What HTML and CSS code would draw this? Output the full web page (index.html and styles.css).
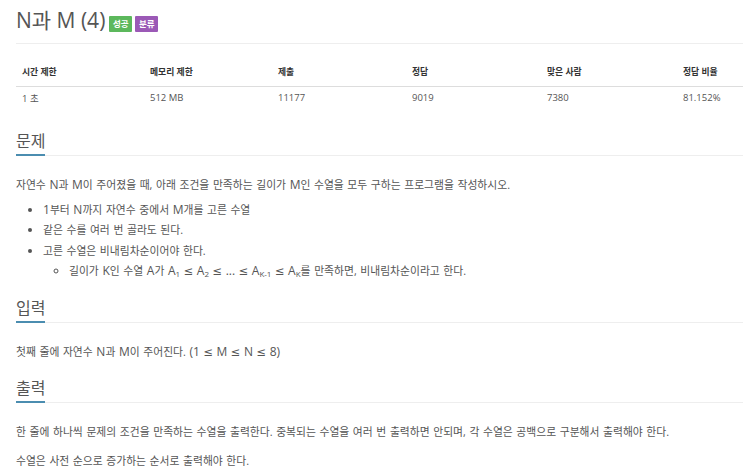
FILE: index.html
```html
<!DOCTYPE html>
<html lang="ko">
<head>
<meta charset="utf-8">
<link rel="stylesheet" href="styles.css">
</head>
<body>
<div class="page">
  <div class="page-header">
    <h1 class="title">N과 M (4) <span class="label label-green">성공</span><span class="label label-purple">분류</span></h1>
  </div>
  <table class="stats">
    <thead>
      <tr><th>시간 제한</th><th>메모리 제한</th><th>제출</th><th>정답</th><th>맞은 사람</th><th>정답 비율</th></tr>
    </thead>
    <tbody>
      <tr><td>1 초</td><td>512 MB</td><td>11177</td><td>9019</td><td>7380</td><td>81.152%</td></tr>
    </tbody>
  </table>

  <section class="section section-first">
    <div class="headline"><h2><span>문제</span></h2></div>
    <div class="text">
      <p>자연수 <span class="en">N</span>과 <span class="en">M</span>이 주어졌을 때, 아래 조건을 만족하는 길이가 <span class="en">M</span>인 수열을 모두 구하는 프로그램을 작성하시오.</p>
      <ul class="list">
        <li><span class="en">1</span>부터 <span class="en">N</span>까지 자연수 중에서 <span class="en">M</span>개를 고른 수열</li>
        <li>같은 수를 여러 번 골라도 된다.</li>
        <li>고른 수열은 비내림차순이어야 한다.
          <ul class="sublist">
            <li>길이가 <span class="en">K</span>인 수열 <span class="en">A</span>가 <span class="en">A<sub>1</sub> <span class="op">≤</span> A<sub>2</sub> <span class="op">≤</span> ... <span class="op">≤</span> A<sub>K-1</sub> <span class="op">≤</span> A<sub>K</sub></span>를 만족하면, 비내림차순이라고 한다.</li>
          </ul>
        </li>
      </ul>
    </div>
  </section>

  <section class="section">
    <div class="headline"><h2><span>입력</span></h2></div>
    <div class="text">
      <p>첫째 줄에 자연수 <span class="en">N</span>과 <span class="en">M</span>이 주어진다. <span class="en">(1 <span class="op">≤</span> M <span class="op">≤</span> N <span class="op">≤</span> 8)</span></p>
    </div>
  </section>

  <section class="section">
    <div class="headline"><h2><span>출력</span></h2></div>
    <div class="text">
      <p>한 줄에 하나씩 문제의 조건을 만족하는 수열을 출력한다. 중복되는 수열을 여러 번 출력하면 안되며, 각 수열은 공백으로 구분해서 출력해야 한다.</p>
      <p>수열은 사전 순으로 증가하는 순서로 출력해야 한다.</p>
    </div>
  </section>
</div>
</body>
</html>
```

FILE: styles.css
```css
* { box-sizing: border-box; }
html, body { margin: 0; padding: 0; background: #fff; }
body {
  font-family: "Open Sans", "Noto Sans CJK KR", sans-serif;
  color: #555;
  font-size: 12px;
}
.page {
  padding: 0 0 0 16px;
}
.page-header {
  border-bottom: 1px solid #eee;
  padding: 6px 0 8px;
}
.title {
  margin: 0;
  font-size: 21px;
  font-weight: 400;
  color: #555;
  line-height: 29px;
  display: flex;
  align-items: flex-start;
  gap: 3px;
}
.label {
  display: inline-block;
  width: 23px;
  height: 16px;
  margin-top: 10px;
  font-size: 8.5px;
  line-height: 16px;
  text-align: center;
  color: #fff;
  font-weight: 700;
  border-radius: 1px;
}
.label-green { background: #5cb85c; margin-left: 1px; }
.label-purple { background: #9b59b6; }

.stats {
  width: 100%;
  border-collapse: collapse;
  margin-top: 14px;
  table-layout: fixed;
}
.stats th, .stats td {
  text-align: left;
  padding: 0 6px;
}
.stats th {
  font-size: 8.8px;
  font-weight: 700;
  color: #333;
  height: 28px;
  vertical-align: middle;
  border-bottom: 1px solid #ddd;
}
.stats td {
  font-size: 9.5px;
  height: 23px;
  color: #555;
}
.stats th:nth-child(1) { width: 128px; }
.stats th:nth-child(2) { width: 128px; }
.stats th:nth-child(3) { width: 134px; }
.stats th:nth-child(4) { width: 135px; }
.stats th:nth-child(5) { width: 136px; }

.section { margin-top: 17px; }
.section-first { margin-top: 22px; }
.headline {
  border-bottom: 1px solid #eee;
}
.headline h2 {
  margin: 0;
  font-size: 16px;
  font-weight: 400;
  line-height: 20px;
  color: #555;
}
.headline h2 span {
  display: inline-block;
  padding-bottom: 3px;
  margin-bottom: -1px;
  border-bottom: 2px solid #4b8db0;
}
.text {
  padding-top: 20px;
  font-size: 10.8px;
  word-spacing: 0.8px;
}
.text .en { font-size: 12px; word-spacing: 0.4px; }
.text .op { font-family: "DejaVu Sans", sans-serif; font-size: 11.5px; }
.text p { margin: 0 0 6px; line-height: 18px; }
.text p + p { margin-top: 11px; }
.list {
  margin: 0;
  padding-left: 27px;
  list-style: disc;
}
.list li { line-height: 20.3px; }
.sublist {
  margin: 0;
  padding-left: 26px;
  list-style: circle;
}
sub { font-size: 8px; vertical-align: -2px; line-height: 0; }
```
